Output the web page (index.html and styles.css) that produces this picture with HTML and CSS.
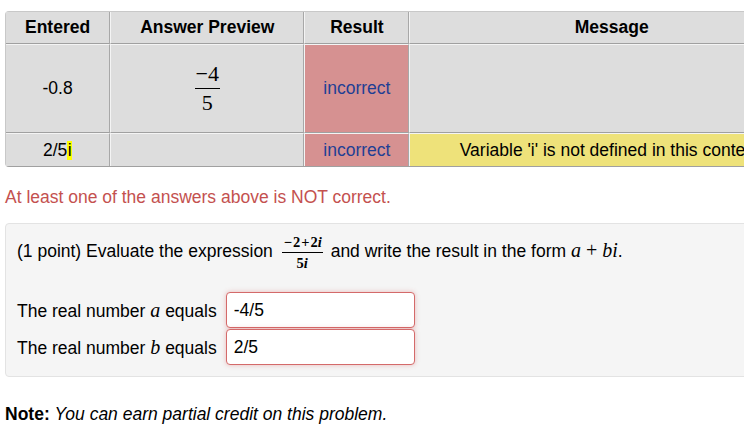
FILE: index.html
```html
<!DOCTYPE html>
<html>
<head>
<meta charset="utf-8">
<link rel="stylesheet" href="styles.css">
</head>
<body>
<div class="page">
  <table class="results">
    <thead>
      <tr class="head-row">
        <th class="c1">Entered</th>
        <th class="c2">Answer Preview</th>
        <th class="c3">Result</th>
        <th class="c4">Message</th>
      </tr>
    </thead>
    <tbody>
      <tr class="row-tall">
        <td>-0.8</td>
        <td>
          <span class="frac big">
            <span class="num">&minus;4</span>
            <span class="den">5</span>
          </span>
        </td>
        <td class="bad">incorrect</td>
        <td></td>
      </tr>
      <tr class="row-short">
        <td>2/5<span class="hl">i</span></td>
        <td></td>
        <td class="bad">incorrect</td>
        <td class="alert">Variable 'i' is not defined in this context.</td>
      </tr>
    </tbody>
  </table>

  <div class="warn">At least one of the answers above is NOT correct.</div>

  <div class="problem">
    <div class="statement">(1 point) Evaluate the expression <span class="frac small"><span class="num"><span class="op">&minus;</span>2<span class="op">+</span>2<i>i</i></span><span class="den">5<i>i</i></span></span> and write the result in the form <span class="m"><i>a</i><span class="bin">+</span><i>bi</i></span>.</div>
    <div class="answer-row">
      <span class="label">The real number <i class="m">a</i> equals</span>
      <input class="ans" type="text" value="-4/5">
    </div>
    <div class="answer-row">
      <span class="label">The real number <i class="m">b</i> equals</span>
      <input class="ans" type="text" value="2/5">
    </div>
  </div>

  <p class="note"><b>Note:</b> <i>You can earn partial credit on this problem.</i></p>
</div>
</body>
</html>
```

FILE: styles.css
```css
html, body {
  margin: 0;
  padding: 0;
  overflow: hidden;
  background: #fff;
}
body {
  font-family: "Liberation Sans", Arial, sans-serif;
  font-size: 17.5px;
  color: #000;
}
.page {
  padding: 11px 0 0 5px;
  width: 820px;
}
.results {
  box-sizing: border-box;
  width: 809px;
  table-layout: fixed;
  border-collapse: separate;
  border-spacing: 0;
  border: 1px solid #c8c8c8;
  border-bottom-color: #a0a0a0;
  border-right: none;
  border-radius: 4px 0 0 4px;
}
.results th, .results td {
  box-sizing: border-box;
  padding: 0;
  text-align: center;
  vertical-align: middle;
  white-space: nowrap;
  overflow: hidden;
  background: #dddddd;
  border-left: 1px solid #f4f4f4;
  border-right: 1px solid #a8a8a8;
  border-top: 1px solid #f4f4f4;
  border-bottom: 1px solid #a0a0a0;
}
.results th:first-child, .results td:first-child {
  border-left: none;
}
.results thead th {
  border-top: none;
  font-weight: bold;
}
.results tbody tr:last-child td {
  border-bottom: none;
}
.c1 { width: 104px; }
.c2 { width: 194px; }
.c3 { width: 105px; }
.c4 { width: 404px; }
.head-row { height: 32px; }
.row-tall { height: 89px; }
.row-short { height: 33px; }
.results td.bad {
  background: #d69191;
  color: #1f3f94;
}
.results td.alert {
  background: #eee27a;
}
.hl {
  background: #ffff00;
  display: inline-block;
  line-height: 19px;
  padding: 0 0.5px;
}
.frac {
  display: inline-flex;
  flex-direction: column;
  align-items: center;
  vertical-align: middle;
  font-family: "Liberation Serif", "DejaVu Serif", serif;
}
.frac .num {
  border-bottom: 1px solid #000;
  padding: 0 2px;
}
.frac.big {
  font-size: 22px;
  line-height: 22px;
}
.frac.big .num { padding: 0 1px 3px 1px; }
.frac.big .den { padding-top: 3px; }
.frac.small {
  font-size: 14.5px;
  line-height: 14px;
  font-weight: bold;
  margin: 0 3px 0 4px;
}
.frac.small .num { padding: 0 1px 3px 1px; }
.frac.small .den { padding-top: 3px; }
.op { margin: 0 1px; }
.m {
  font-family: "Liberation Serif", "DejaVu Serif", serif;
  font-size: 20px;
}
.bin { margin: 0 5px; }
.warn {
  color: #c4514f;
  line-height: 24px;
  margin-top: 18px;
  margin-bottom: 14px;
}
.problem {
  box-sizing: border-box;
  width: 809px;
  background: #f5f5f5;
  border: 1px solid #e3e3e3;
  border-radius: 4px;
  padding: 10px 11px 11px 11px;
}
.statement {
  height: 32px;
  line-height: 32px;
  margin-bottom: 26px;
  white-space: nowrap;
}
.answer-row {
  display: flex;
  align-items: center;
  gap: 9px;
  height: 36px;
  margin-bottom: 1px;
}
.answer-row:last-child { margin-bottom: 0; }
.ans {
  box-sizing: border-box;
  width: 189px;
  height: 36px;
  font-family: "Liberation Sans", Arial, sans-serif;
  font-size: 17.5px;
  color: #000;
  padding: 0 7px;
  border: 1px solid #d46a6a;
  border-radius: 4px;
  background: #fff;
  box-shadow: 0 0 5px rgba(210, 80, 80, 0.35);
  outline: none;
}
.note {
  margin: 25px 0 0 0;
  line-height: 24px;
}
```
